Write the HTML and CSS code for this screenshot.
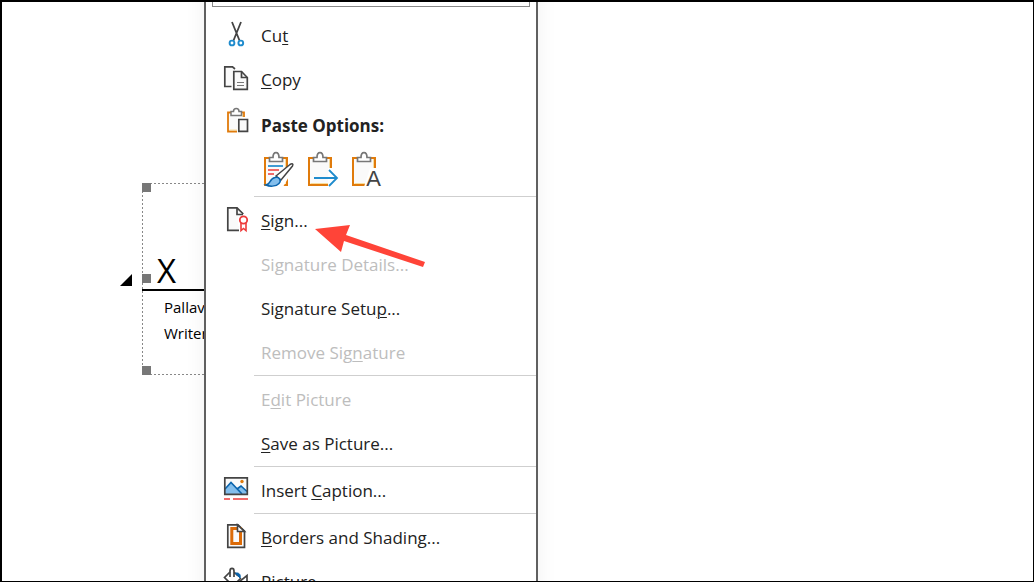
FILE: index.html
```html
<!DOCTYPE html>
<html lang="en">
<head>
  <meta charset="UTF-8">
  <meta name="viewport" content="width=device-width, initial-scale=1.0">
  <title>Signature line</title>
  <link rel="stylesheet" href="styles.css">
</head>
<body>

  <main class="page">
    <div class="marker"></div>
    <section class="signature">
      <span class="handle"></span>
      <div class="sign-here"><span class="handle"></span><span class="x">X</span></div>
      <div class="signer">
        <p>Pallavi</p>
        <p>Writer</p>
      </div>
      <span class="handle"></span>
    </section>

    <div class="menu">
      <input class="search" type="text" aria-label="Search the menus">

      <button class="item">
        <svg class="icon" viewBox="0 0 28 36" fill="none">
          <path d="M9 5L16.500 23.500M18 5L10.500 23.500" stroke="#444" stroke-width="1.800"/>
          <circle cx="9" cy="26" r="2.400" stroke="#1e8bcd" stroke-width="1.900"/>
          <circle cx="17.800" cy="26" r="2.400" stroke="#1e8bcd" stroke-width="1.900"/>
        </svg>
        <span>Cu<u>t</u></span>
      </button>
      <button class="item">
        <svg class="icon" viewBox="0 0 28 36" fill="#fafafa" stroke="#444" stroke-width="1.700">
          <path d="M8.500 25.500H1.800V5.800H9.500L12 8" />
          <path d="M10.800 10.500H18.500L24.300 16.500V28.300H10.800Z"/>
          <path d="M18.500 10.500V16.500H24.300" fill="none"/>
          <path d="M14 21.500H21M14 24.500H21" stroke="#777" stroke-width="1.200"/>
        </svg>
        <span><u>C</u>opy</span>
      </button>

      <div class="item heading">
        <svg class="icon" viewBox="0 0 28 36" fill="none">
          <path d="M5 5.500H21V24.500H5Z" fill="#fafafa" stroke="#e07b0c" stroke-width="1.800"/>
          <path d="M6.500 23H19.500V7" stroke="#f8dc9c"/>
          <path d="M8 8.500V4.500H10.500C10.500 .5 16 .5 16 4.500H18.500V8.500Z" fill="#fff" stroke="#777" stroke-width="1.500"/>
          <path d="M14 10H27V26H14Z" fill="#fff"/>
          <path d="M15.800 12.500H24.500V24.300H15.800Z" fill="#fafafa" stroke="#444" stroke-width="1.700"/>
        </svg>
        <span>Paste Options:</span>
      </div>
      <div class="paste-options">
        <button aria-label="Keep Source Formatting">
          <svg viewBox="0 0 32 36" fill="none">
            <path d="M3 7H25V34H3Z" fill="#fafafa" stroke="#e07b0c" stroke-width="2"/>
            <path d="M4.500 32.500H23.500V8" stroke="#f8dc9c"/>
            <path d="M7.500 10.500V6.500H11C11 0 17 0 17 6.500H20.500V10.500Z" fill="#fff" stroke="#777" stroke-width="1.700"/>
            <path d="M6 15H21" stroke="#1e8bcd" stroke-width="1.700"/>
            <path d="M6 19H17M6 23H12" stroke="#ed3b3b" stroke-width="1.700"/>
            <path d="M30 12L16 23L8 30L3 36H21L32 17Z" fill="#fff"/>
            <path d="M14 25L28 13.500C30.500 12 31.500 13 30.500 15L19 29Z" fill="#fff" stroke="#444" stroke-width="1.500"/>
            <path d="M4 34C9 33.500 7 27.500 13 26.500C17 25.500 20 29.500 17 32.500C14 36 7 35.500 4 34Z" fill="#83beec" stroke="#0a64ad" stroke-width="1.500"/>
          </svg>
        </button>
        <button aria-label="Use Destination Theme">
          <svg viewBox="0 0 32 36" fill="none">
            <path d="M3 7H25V34H3Z" fill="#fafafa" stroke="#e07b0c" stroke-width="2"/>
            <path d="M4.500 32.500H23.500V8" stroke="#f8dc9c"/>
            <path d="M7.500 10.500V6.500H11C11 0 17 0 17 6.500H20.500V10.500Z" fill="#fff" stroke="#777" stroke-width="1.700"/>
            <path d="M22 17H27L32 26V36H22Z" fill="#fff"/>
            <path d="M8 27H31M23 19L31 27L23 35" stroke="#1e8bcd" stroke-width="1.800"/>
          </svg>
        </button>
        <button aria-label="Keep Text Only">
          <svg viewBox="0 0 32 36" fill="none">
            <path d="M3 7H25V34H3Z" fill="#fafafa" stroke="#e07b0c" stroke-width="2"/>
            <path d="M4.500 32.500H23.500V8" stroke="#f8dc9c"/>
            <path d="M7.500 10.500V6.500H11C11 0 17 0 17 6.500H20.500V10.500Z" fill="#fff" stroke="#777" stroke-width="1.700"/>
            <path d="M20 17H27L32 30V36H14Z" fill="#fff"/>
            <text x="23.500" y="35" class="icon-letter">A</text>
          </svg>
        </button>
      </div>

      <hr>
      <button class="item">
        <svg class="icon" viewBox="0 0 28 36" fill="none">
          <path d="M16 28.300H4.800V5.800H14L20 12V14H15V24H16Z" fill="#fafafa"/>
          <path d="M16 28.300H4.800V5.800H14L20.300 12" stroke="#444" stroke-width="1.700"/>
          <path d="M14 5.800V12.500H20" stroke="#444" stroke-width="1.700"/>
          <path d="M18 21V28.500L20.500 26.500L23 28.500V21" fill="#fff" stroke="#ed3b3b" stroke-width="1.600"/>
          <circle cx="20.500" cy="18" r="3.700" fill="#fff" stroke="#ed3b3b" stroke-width="1.800"/>
        </svg>
        <span><u>S</u>ign...</span>
      </button>
      <button class="item" disabled><span>Si<u>g</u>nature Details...</span></button>
      <button class="item"><span>Signature Setu<u>p</u>...</span></button>
      <button class="item" disabled><span>Remove Sig<u>n</u>ature</span></button>

      <hr>
      <button class="item" disabled><span>E<u>d</u>it Picture</span></button>
      <button class="item"><span><u>S</u>ave as Picture...</span></button>

      <hr>
      <button class="item">
        <svg class="icon" viewBox="0 0 28 36" fill="none">
          <path d="M1.800 5.800H24.300V22.300H1.800Z" fill="#fafafa"/>
          <path d="M2 17L8 10.500L14 16.500L18 13.500L24 19V22H2Z" fill="#83beec"/>
          <path d="M2 17L8 10.500L19 22M14 17L18 14L24 19.500" stroke="#0a64ad" stroke-width="1.600"/>
          <path d="M1.800 5.800H24.300V22.300H1.800Z" stroke="#444" stroke-width="1.700"/>
          <circle cx="19" cy="9.500" r="1.700" fill="#e07b0c"/>
          <path d="M1 27H7M10 27H25" stroke="#ed3b3b" stroke-width="1.700"/>
        </svg>
        <span>Insert <u>C</u>aption...</span>
      </button>

      <hr>
      <button class="item">
        <svg class="icon" viewBox="0 0 28 36" fill="none">
          <path d="M4.800 5.800H15L21.500 12V28.300H4.800Z" fill="#fafafa" stroke="#444" stroke-width="1.700"/>
          <path d="M8.800 9.500H17.500V24.500H8.800Z" stroke="#dc6b08" stroke-width="3"/>
          <path d="M14.500 5.800V12.500H21.500Z" fill="#fff" stroke="#444" stroke-width="1.600"/>
        </svg>
        <span><u>B</u>orders and Shading...</span>
      </button>
      <button class="item">
        <svg class="icon" viewBox="0 0 28 36" fill="none" stroke="#444" stroke-width="1.700">
          <path d="M7 9L1.500 14.500L10 23L18 15"/>
          <path d="M7 14V8C7 4.500 11 4.500 11 8V14M11 9L15 13"/>
          <path d="M12.500 10C16 9.500 18 11.500 17 15L14.500 12.500Z" fill="#0a64ad" stroke="#0a64ad" stroke-width="1"/>
          <path d="M16 19L24 12.500V22"/>
        </svg>
        <span><u>P</u>icture...</span>
      </button>
    </div>

    <svg class="arrow" viewBox="0 0 112 44" fill="#ff4438">
      <path d="M1 4L36 0L32 10L111 37L109 42L30 16L27 27Z"/>
    </svg>
  </main>

</body>
</html>
```
FILE: styles.css
```css
* {
  box-sizing: border-box;
}

body {
  margin: 0;
  font-family: "Open Sans", "Noto Sans", sans-serif;
  background-color: #fff;
  color: #222;
}

.page {
  position: relative;
  display: flex;
  align-items: flex-start;
  gap: 10px;
  height: 100vh;
  padding: 181px 0 0 118px;
  border: 1px solid #000;
  border-width: 2px 1px 1px 2px;
  overflow: hidden;
}

/* signature line in the document */
.marker {
  width: 12px;
  height: 12px;
  margin-top: 91px;
  background-color: #000;
  clip-path: polygon(100% 0, 100% 100%, 0 100%);
}

.signature {
  display: flex;
  flex-direction: column;
  width: 300px;
  height: 192px;
  color: #000;
  background-image:
    repeating-linear-gradient(90deg, #888 0 2px, transparent 2px 4px),
    repeating-linear-gradient(90deg, #888 0 2px, transparent 2px 4px),
    repeating-linear-gradient(#888 0 2px, transparent 2px 4px);
  background-size: 100% 1px, 100% 1px, 1px 100%;
  background-position: top, bottom, left;
  background-repeat: no-repeat;
}

.handle {
  width: 9px;
  height: 9px;
  background-color: #777;
}

.sign-here {
  display: flex;
  align-items: flex-end;
  gap: 6px;
  height: 99px;
  padding-bottom: 6px;
  border-bottom: 2px solid #000;
}

.x {
  font-size: 33px;
  line-height: 24px;
}

.signer {
  flex: 1;
  padding: 3px 0 0 22px;
  font-size: 15px;
  line-height: 26px;
}

.signer p {
  margin: 0;
}

/* context menu */
.menu {
  position: absolute;
  top: -22px;
  left: 202px;
  width: 334px;
  background-color: #fff;
  border: 2px solid #606060;
  box-shadow: 0 0 20px rgba(0, 0, 0, 0.06);
}

.search {
  display: block;
  width: 318px;
  height: 25px;
  margin: 0 6px 6px;
  border: 1px solid #888;
}

.item {
  display: flex;
  align-items: center;
  gap: 10px;
  width: 100%;
  height: 44px;
  padding: 0 0 0 17px;
  border: 0;
  background: none;
  color: #222;
  font-family: inherit;
  font-size: 17px;
  line-height: 24px;
  text-align: left;
}

.item:disabled {
  color: #bdbdbd;
}

.item > span {
  padding-top: 2px;
}

.item > span:only-child {
  padding-left: 38px;
}

.item u {
  text-decoration-thickness: 1px;
  text-underline-offset: 2px;
}

.icon {
  width: 28px;
  height: 36px;
}

.heading {
  height: 48px;
  font-weight: bold;
}

.paste-options {
  display: flex;
  gap: 12px;
  height: 46px;
  padding: 2px 0 0 56px;
}

.paste-options button {
  width: 32px;
  height: 36px;
  padding: 0;
  border: 0;
  background: none;
}

.paste-options svg {
  display: block;
  overflow: visible;
}

.icon-letter {
  font-size: 22px;
  fill: #444;
  text-anchor: middle;
}

.menu hr {
  height: 1px;
  margin: 1px 0 1px 48px;
  border: 0;
  background-color: #cfcfcf;
}

.arrow {
  position: absolute;
  top: 223px;
  left: 312px;
  width: 112px;
  height: 44px;
}
```
